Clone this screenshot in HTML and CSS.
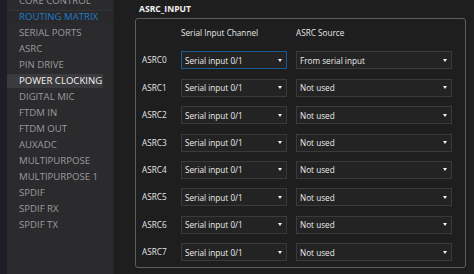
FILE: index.html
```html
<!DOCTYPE html>
<html>
<head>
<meta charset="utf-8">
<link rel="stylesheet" href="styles.css">
</head>
<body>
<div class="app">
  <div class="rail"></div>
  <nav class="sidebar">
    <ul class="nav-list">
      <li class="nav-item">CORE CONTROL</li>
      <li class="nav-item active">ROUTING MATRIX</li>
      <li class="nav-item">SERIAL PORTS</li>
      <li class="nav-item">ASRC</li>
      <li class="nav-item">PIN DRIVE</li>
      <li class="nav-item hover">POWER CLOCKING</li>
      <li class="nav-item">DIGITAL MIC</li>
      <li class="nav-item">FTDM IN</li>
      <li class="nav-item">FTDM OUT</li>
      <li class="nav-item">AUXADC</li>
      <li class="nav-item">MULTIPURPOSE</li>
      <li class="nav-item">MULTIPURPOSE 1</li>
      <li class="nav-item">SPDIF</li>
      <li class="nav-item">SPDIF RX</li>
      <li class="nav-item">SPDIF TX</li>
    </ul>
  </nav>
  <main class="main">
    <h2 class="group-title">ASRC_INPUT</h2>
    <section class="group">
      <div class="grid">
        <div></div>
        <div class="col-head">Serial Input Channel</div>
        <div class="col-head">ASRC Source</div>

        <div class="row-label">ASRC0</div>
        <div class="select focused"><span>Serial input 0/1</span><i class="arrow"></i></div>
        <div class="select"><span>From serial input</span><i class="arrow"></i></div>

        <div class="row-label">ASRC1</div>
        <div class="select"><span>Serial input 0/1</span><i class="arrow"></i></div>
        <div class="select"><span>Not used</span><i class="arrow"></i></div>

        <div class="row-label">ASRC2</div>
        <div class="select"><span>Serial input 0/1</span><i class="arrow"></i></div>
        <div class="select"><span>Not used</span><i class="arrow"></i></div>

        <div class="row-label">ASRC3</div>
        <div class="select"><span>Serial input 0/1</span><i class="arrow"></i></div>
        <div class="select"><span>Not used</span><i class="arrow"></i></div>

        <div class="row-label">ASRC4</div>
        <div class="select"><span>Serial input 0/1</span><i class="arrow"></i></div>
        <div class="select"><span>Not used</span><i class="arrow"></i></div>

        <div class="row-label">ASRC5</div>
        <div class="select"><span>Serial input 0/1</span><i class="arrow"></i></div>
        <div class="select"><span>Not used</span><i class="arrow"></i></div>

        <div class="row-label">ASRC6</div>
        <div class="select"><span>Serial input 0/1</span><i class="arrow"></i></div>
        <div class="select"><span>Not used</span><i class="arrow"></i></div>

        <div class="row-label">ASRC7</div>
        <div class="select"><span>Serial input 0/1</span><i class="arrow"></i></div>
        <div class="select"><span>Not used</span><i class="arrow"></i></div>
      </div>
    </section>
  </main>
</div>
</body>
</html>
```

FILE: styles.css
```css
* { box-sizing: border-box; }
html, body {
  margin: 0;
  padding: 0;
  width: 474px;
  height: 274px;
  overflow: hidden;
  background: #1e1e1e;
  font-family: "Open Sans", "Noto Sans", sans-serif;
}
.app {
  display: flex;
  height: 274px;
}
.rail {
  width: 7px;
  background: #1e1e28;
  flex: none;
}
.sidebar {
  width: 107px;
  flex: none;
  background: #2b2b2d;
  border-right: 1px solid #232325;
  overflow: hidden;
}
.nav-list {
  list-style: none;
  margin: -6px 0 0 0;
  padding: 0;
  display: flex;
  flex-direction: column;
  gap: 2px;
}
.nav-item {
  height: 14px;
  line-height: 14px;
  padding-left: 12px;
  font-size: 9.6px;
  color: #9a9a9c;
  white-space: nowrap;
  margin-right: 10px;
}
.nav-item.active {
  color: #1f7ac8;
  background: #29292b;
  box-shadow: inset 0 1px 0 #343437;
  margin-right: 0;
}
.nav-item.hover {
  color: #f2f2f2;
  background: #3b3b3d;
}
.main {
  flex: 1;
  padding: 4px 9px 6px 21px;
  display: flex;
  flex-direction: column;
}
.group-title {
  margin: 0 0 0 4px;
  height: 14px;
  line-height: 11px;
  font-size: 8.6px;
  font-weight: 700;
  color: #f0f0f0;
}
.group {
  width: 331px;
  height: 251px;
  border: 1px solid #5e5e5e;
  border-radius: 3px;
  background: #1e1e1e;
  padding: 5px 0 0 6px;
}
.grid {
  display: grid;
  grid-template-columns: 30px 106px 156px;
  grid-auto-rows: 18px;
  column-gap: 9px;
  row-gap: 9.4px;
}
.col-head {
  font-size: 8.2px;
  color: #e6e6e6;
  line-height: 18px;
}
.row-label {
  font-size: 8.2px;
  color: #e6e6e6;
  line-height: 18px;
}
.select {
  display: flex;
  align-items: center;
  justify-content: space-between;
  background: #232323;
  border: 1px solid #3a3a3a;
  padding: 0 4px 0 3px;
  font-size: 8.2px;
  color: #ececec;
}
.select.focused {
  border-color: #1d5a8e;
}
.arrow {
  width: 0;
  height: 0;
  border-left: 2.5px solid transparent;
  border-right: 2.5px solid transparent;
  border-top: 3px solid #f4f4f4;
}
```
